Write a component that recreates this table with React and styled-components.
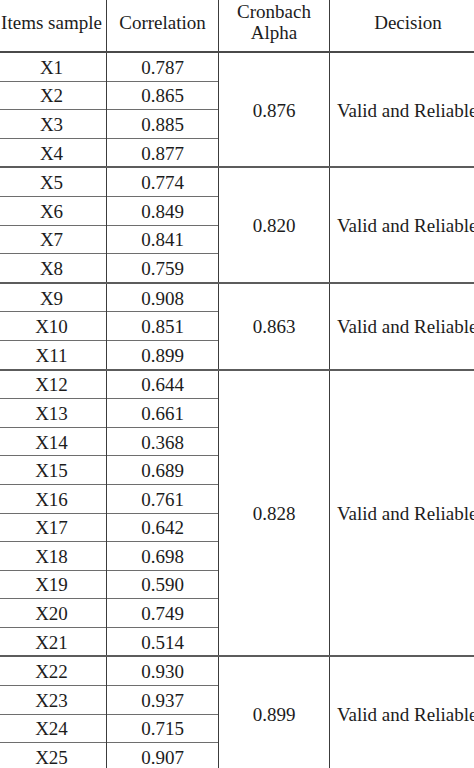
import React from "react";
import styled, { createGlobalStyle } from "styled-components";

const GlobalStyle = createGlobalStyle`
  html, body {
    margin: 0;
    padding: 0;
    background: #ffffff;
  }
`;

const Page = styled.div`
  width: 474px;
  height: 768px;
  overflow: hidden;
  background: #ffffff;
`;

const Table = styled.table`
  border-collapse: collapse;
  width: 486px;
  margin-left: -3px;
  margin-top: -7px;
  font-family: "Liberation Serif", "Times New Roman", serif;
  font-size: 19px;
  color: #1c1c1c;
  table-layout: fixed;
`;

const HeadCell = styled.th`
  font-weight: normal;
  height: 58px;
  padding: 0;
  line-height: 21px;
  text-align: center;
  vertical-align: middle;
  border-bottom: 2px solid #4a4a4a;
  border-left: 1.5px solid #3c3c3c;
  width: ${(p) => p.$w}px;
  white-space: nowrap;

  &:first-child {
    border-left: none;
  }
`;

const Cell = styled.td`
  height: 27.6px;
  padding: 0;
  text-align: center;
  vertical-align: middle;
  line-height: 20px;
  border-left: 1.5px solid #3c3c3c;
  border-top: ${(p) => (p.$groupStart ? "2px solid #5c5c5c" : "1px solid #6e6e6e")};

  &:first-child {
    border-left: none;
  }
`;

const CellText = styled.span`
  display: inline-block;
  transform: translateY(1px);
`;

const SpanCell = styled(Cell)`
  border-top: 2px solid #5c5c5c;
`;

const DecisionCell = styled(SpanCell)`
  text-align: left;
  padding-left: 7px;
  white-space: nowrap;
`;

const groups = [
  {
    alpha: "0.876",
    items: [
      ["X1", "0.787"],
      ["X2", "0.865"],
      ["X3", "0.885"],
      ["X4", "0.877"],
    ],
  },
  {
    alpha: "0.820",
    items: [
      ["X5", "0.774"],
      ["X6", "0.849"],
      ["X7", "0.841"],
      ["X8", "0.759"],
    ],
  },
  {
    alpha: "0.863",
    items: [
      ["X9", "0.908"],
      ["X10", "0.851"],
      ["X11", "0.899"],
    ],
  },
  {
    alpha: "0.828",
    items: [
      ["X12", "0.644"],
      ["X13", "0.661"],
      ["X14", "0.368"],
      ["X15", "0.689"],
      ["X16", "0.761"],
      ["X17", "0.642"],
      ["X18", "0.698"],
      ["X19", "0.590"],
      ["X20", "0.749"],
      ["X21", "0.514"],
    ],
  },
  {
    alpha: "0.899",
    items: [
      ["X22", "0.930"],
      ["X23", "0.937"],
      ["X24", "0.715"],
      ["X25", "0.907"],
    ],
  },
];

const App = () => {
  return (
    <Page>
      <GlobalStyle />
      <Table>
        <thead>
          <tr>
            <HeadCell $w={109}>Items sample</HeadCell>
            <HeadCell $w={111}>Correlation</HeadCell>
            <HeadCell $w={110}>
              Cronbach
              <br />
              Alpha
            </HeadCell>
            <HeadCell $w={156}>Decision</HeadCell>
          </tr>
        </thead>
        <tbody>
          {groups.map((group) =>
            group.items.map(([item, corr], i) => (
              <tr key={item}>
                <Cell $groupStart={i === 0}>
                  <CellText>{item}</CellText>
                </Cell>
                <Cell $groupStart={i === 0}>
                  <CellText>{corr}</CellText>
                </Cell>
                {i === 0 && (
                  <>
                    <SpanCell rowSpan={group.items.length}>
                      <CellText>{group.alpha}</CellText>
                    </SpanCell>
                    <DecisionCell rowSpan={group.items.length}>
                      <CellText>Valid and Reliable</CellText>
                    </DecisionCell>
                  </>
                )}
              </tr>
            ))
          )}
        </tbody>
      </Table>
    </Page>
  );
};

export default App;
